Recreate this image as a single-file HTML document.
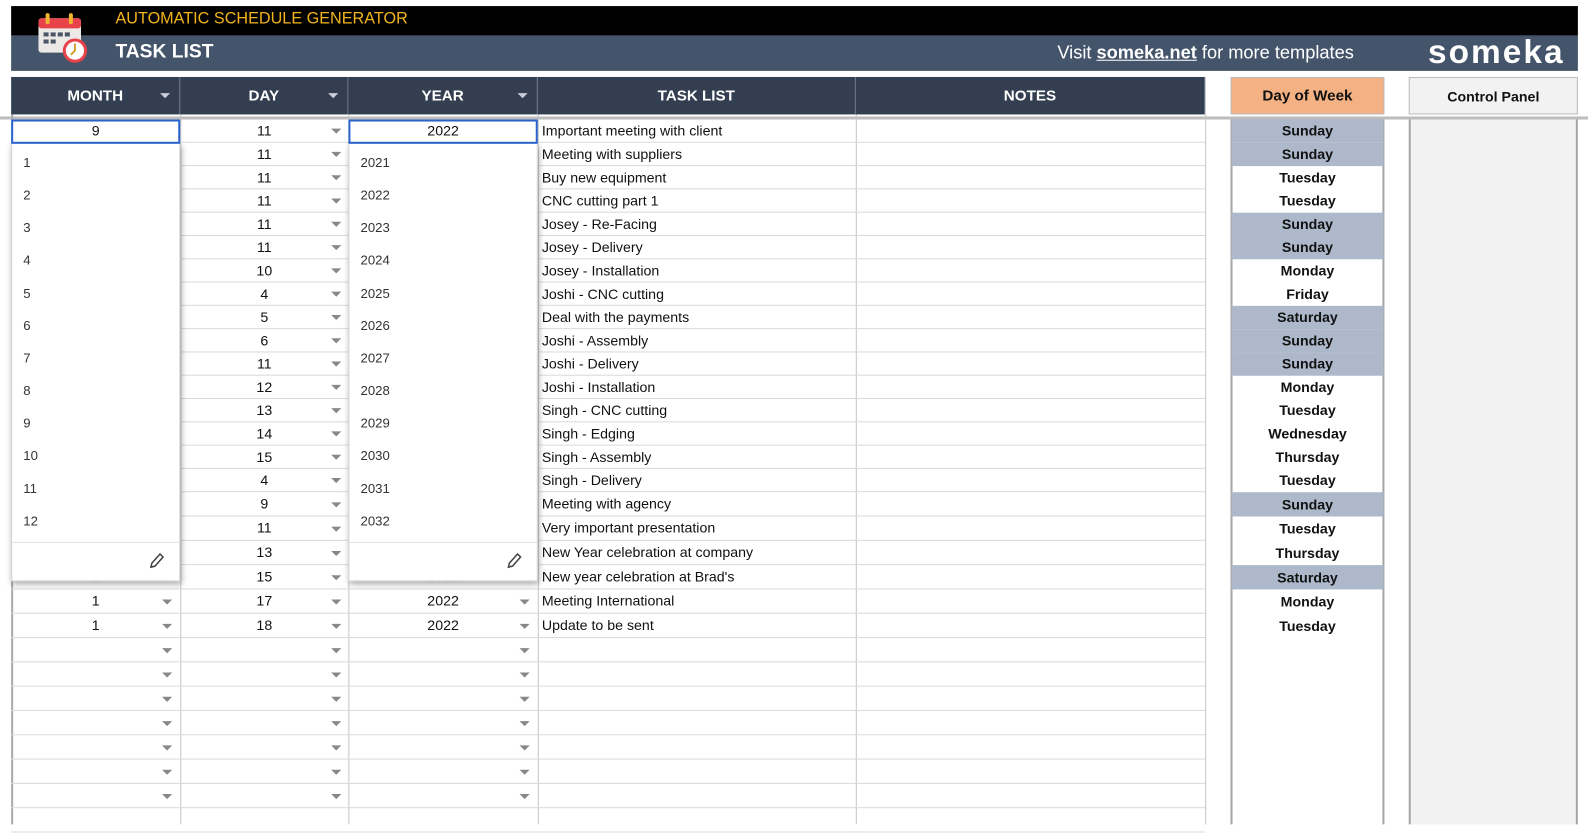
<!DOCTYPE html>
<html><head><meta charset="utf-8"><style>
*{margin:0;padding:0;box-sizing:border-box}
body{width:1588px;height:814px;background:#fff;position:relative;overflow:hidden;font-family:"Liberation Sans",sans-serif;font-size:14px;color:#111}
#w{position:absolute;left:0;top:0;width:1568px;height:804px;transform:scale(1.01276);transform-origin:0 0}
.a{position:absolute}
.top{left:11px;top:6px;width:1547px;height:29px;background:#000}
.nav{left:11px;top:35px;width:1547px;height:35px;background:#44546a}
.hd{top:76px;height:37px;background:#333f50;color:#fff;font-weight:bold;font-size:15px;text-align:center;line-height:37px;border-right:1px solid #6d7a8c}
.hd i{position:absolute;right:9px;top:16px;border-left:5px solid transparent;border-right:5px solid transparent;border-top:5px solid #ccd}
.r{position:absolute;left:11px;width:1179px;border-bottom:1px solid #dadada}
.c{position:absolute;top:0;text-align:center}
.m{left:0;width:167px}.d{left:167px;width:166px}.y{left:333px;width:187px}
.t{left:524px;white-space:nowrap}
.ar{position:absolute;top:50%;margin-top:-2px;border-left:5px solid transparent;border-right:5px solid transparent;border-top:5px solid #888}
.vl{position:absolute;top:113px;height:701px;width:1px;background:#c4c4c4}
.dw{position:absolute;left:1216px;width:150px;text-align:center;font-weight:bold}
.hl{background:#adb9ca}
.dd{position:absolute;background:#fff;box-shadow:1px 3px 6px rgba(0,0,0,.35);border:1px solid #d4d4d4}
.dd div{position:absolute;left:11px;font-size:13px;color:#333}
.sel{position:absolute;border:2px solid #2a62c9;background:#fff;text-align:center;line-height:19px}
</style></head><body><div id="w">
<div class="a top"></div>
<div class="a nav"></div>
<svg class="a" style="left:36px;top:12px" width="54" height="52" viewBox="0 0 54 52">
<rect x="2" y="6" width="42" height="34" rx="3" fill="#ece9e6"/>
<rect x="2" y="6" width="42" height="10" rx="3" fill="#e8424a"/>
<rect x="9" y="1" width="4" height="11" rx="2" fill="#f1b531"/><rect x="32" y="1" width="4" height="11" rx="2" fill="#f1b531"/>
<g fill="#4b5768"><rect x="7" y="20" width="5" height="4"/><rect x="14" y="20" width="5" height="4"/><rect x="21" y="20" width="5" height="4"/><rect x="28" y="20" width="5" height="4"/><rect x="7" y="27" width="5" height="4"/><rect x="14" y="27" width="5" height="4"/></g>
<circle cx="38" cy="38" r="12" fill="#e8424a"/><circle cx="38" cy="38" r="9" fill="#fff"/>
<path d="M38 31v7l-4 4" stroke="#d19a20" stroke-width="1.8" fill="none"/></svg>
<div class="a" style="left:114px;top:10px;color:#f2b41c;font-size:16px">AUTOMATIC SCHEDULE GENERATOR</div>
<div class="a" style="left:114px;top:41px;color:#fff;font-size:19px;font-weight:bold">TASK LIST</div>
<div class="a" style="left:1044px;top:42px;color:#fff;font-size:18px">Visit <b style="text-decoration:underline">someka.net</b> for more templates</div>
<div class="a" style="left:1410px;top:32px;color:#fff;font-size:33px;letter-spacing:2px;font-weight:bold">someka</div>

<div class="a hd" style="left:11px;width:167px">MONTH<i></i></div>
<div class="a hd" style="left:178px;width:166px">DAY<i></i></div>
<div class="a hd" style="left:344px;width:187px">YEAR<i></i></div>
<div class="a hd" style="left:531px;width:314px">TASK LIST</div>
<div class="a hd" style="left:845px;width:345px">NOTES</div>
<div class="a" style="left:1215px;top:76px;width:152px;height:37px;background:#f4b183;border:1px solid #bbb;text-align:center;line-height:36px;font-weight:bold;font-size:15px">Day of Week</div>
<div class="a" style="left:1391px;top:76px;width:167px;height:37px;background:#f2f2f2;border:1px solid #bbb;text-align:center;line-height:36px;font-weight:bold">Control Panel</div>
<div class="a" style="left:0;top:115px;width:1588px;height:3px;background:#bdbdbd"></div>
<div class="a" style="left:1215px;top:118px;width:152px;height:696px;border-left:2px solid #a6a6a6;border-right:2px solid #a6a6a6"></div>
<div class="a" style="left:1391px;top:118px;width:167px;height:696px;background:#f2f2f2;border-left:2px solid #a6a6a6;border-right:2px solid #a6a6a6"></div>

<div class="vl" style="left:11px;background:#aaa;width:2px"></div>
<div class="vl" style="left:178px"></div><div class="vl" style="left:344px"></div><div class="vl" style="left:531px"></div><div class="vl" style="left:845px"></div><div class="vl" style="left:1190px"></div>

<div class="r" style="top:118px;height:23px;line-height:22px"><div class="c d">11</div><span class="ar" style="left:316px"></span><div class="c t">Important meeting with client</div></div>
<div class="r" style="top:141px;height:23px;line-height:22px"><div class="c d">11</div><span class="ar" style="left:316px"></span><div class="c t">Meeting with suppliers</div></div>
<div class="r" style="top:164px;height:23px;line-height:22px"><div class="c d">11</div><span class="ar" style="left:316px"></span><div class="c t">Buy new equipment</div></div>
<div class="r" style="top:187px;height:23px;line-height:22px"><div class="c d">11</div><span class="ar" style="left:316px"></span><div class="c t">CNC cutting part 1</div></div>
<div class="r" style="top:210px;height:23px;line-height:22px"><div class="c d">11</div><span class="ar" style="left:316px"></span><div class="c t">Josey - Re-Facing</div></div>
<div class="r" style="top:233px;height:23px;line-height:22px"><div class="c d">11</div><span class="ar" style="left:316px"></span><div class="c t">Josey - Delivery</div></div>
<div class="r" style="top:256px;height:23px;line-height:22px"><div class="c d">10</div><span class="ar" style="left:316px"></span><div class="c t">Josey - Installation</div></div>
<div class="r" style="top:279px;height:23px;line-height:22px"><div class="c d">4</div><span class="ar" style="left:316px"></span><div class="c t">Joshi - CNC cutting</div></div>
<div class="r" style="top:302px;height:23px;line-height:22px"><div class="c d">5</div><span class="ar" style="left:316px"></span><div class="c t">Deal with the payments</div></div>
<div class="r" style="top:325px;height:23px;line-height:22px"><div class="c d">6</div><span class="ar" style="left:316px"></span><div class="c t">Joshi - Assembly</div></div>
<div class="r" style="top:348px;height:23px;line-height:22px"><div class="c d">11</div><span class="ar" style="left:316px"></span><div class="c t">Joshi - Delivery</div></div>
<div class="r" style="top:371px;height:23px;line-height:22px"><div class="c d">12</div><span class="ar" style="left:316px"></span><div class="c t">Joshi - Installation</div></div>
<div class="r" style="top:394px;height:23px;line-height:22px"><div class="c d">13</div><span class="ar" style="left:316px"></span><div class="c t">Singh - CNC cutting</div></div>
<div class="r" style="top:417px;height:23px;line-height:22px"><div class="c d">14</div><span class="ar" style="left:316px"></span><div class="c t">Singh - Edging</div></div>
<div class="r" style="top:440px;height:23px;line-height:22px"><div class="c d">15</div><span class="ar" style="left:316px"></span><div class="c t">Singh - Assembly</div></div>
<div class="r" style="top:463px;height:23px;line-height:22px"><div class="c d">4</div><span class="ar" style="left:316px"></span><div class="c t">Singh - Delivery</div></div>
<div class="r" style="top:486px;height:24px;line-height:23px"><div class="c d">9</div><span class="ar" style="left:316px"></span><div class="c t">Meeting with agency</div></div>
<div class="r" style="top:510px;height:24px;line-height:23px"><div class="c d">11</div><span class="ar" style="left:316px"></span><div class="c t">Very important presentation</div></div>
<div class="r" style="top:534px;height:24px;line-height:23px"><div class="c d">13</div><span class="ar" style="left:316px"></span><div class="c t">New Year celebration at company</div></div>
<div class="r" style="top:558px;height:24px;line-height:23px"><div class="c m">1</div><span class="ar" style="left:149px"></span><div class="c d">15</div><span class="ar" style="left:316px"></span><div class="c y">2022</div><span class="ar" style="left:502px"></span><div class="c t">New year celebration at Brad's</div></div>
<div class="r" style="top:582px;height:24px;line-height:23px"><div class="c m">1</div><span class="ar" style="left:149px"></span><div class="c d">17</div><span class="ar" style="left:316px"></span><div class="c y">2022</div><span class="ar" style="left:502px"></span><div class="c t">Meeting International</div></div>
<div class="r" style="top:606px;height:24px;line-height:23px"><div class="c m">1</div><span class="ar" style="left:149px"></span><div class="c d">18</div><span class="ar" style="left:316px"></span><div class="c y">2022</div><span class="ar" style="left:502px"></span><div class="c t">Update to be sent</div></div>
<div class="r" style="top:630px;height:24px"><span class="ar" style="left:149px"></span><span class="ar" style="left:316px"></span><span class="ar" style="left:502px"></span></div>
<div class="r" style="top:654px;height:24px"><span class="ar" style="left:149px"></span><span class="ar" style="left:316px"></span><span class="ar" style="left:502px"></span></div>
<div class="r" style="top:678px;height:24px"><span class="ar" style="left:149px"></span><span class="ar" style="left:316px"></span><span class="ar" style="left:502px"></span></div>
<div class="r" style="top:702px;height:24px"><span class="ar" style="left:149px"></span><span class="ar" style="left:316px"></span><span class="ar" style="left:502px"></span></div>
<div class="r" style="top:726px;height:24px"><span class="ar" style="left:149px"></span><span class="ar" style="left:316px"></span><span class="ar" style="left:502px"></span></div>
<div class="r" style="top:750px;height:24px"><span class="ar" style="left:149px"></span><span class="ar" style="left:316px"></span><span class="ar" style="left:502px"></span></div>
<div class="r" style="top:774px;height:24px"><span class="ar" style="left:149px"></span><span class="ar" style="left:316px"></span><span class="ar" style="left:502px"></span></div>
<div class="r" style="top:798px;height:24px"></div>

<div class="dw hl" style="top:118px;height:23px;line-height:22px">Sunday</div>
<div class="dw hl" style="top:141px;height:23px;line-height:22px">Sunday</div>
<div class="dw" style="top:164px;height:23px;line-height:22px">Tuesday</div>
<div class="dw" style="top:187px;height:23px;line-height:22px">Tuesday</div>
<div class="dw hl" style="top:210px;height:23px;line-height:22px">Sunday</div>
<div class="dw hl" style="top:233px;height:23px;line-height:22px">Sunday</div>
<div class="dw" style="top:256px;height:23px;line-height:22px">Monday</div>
<div class="dw" style="top:279px;height:23px;line-height:22px">Friday</div>
<div class="dw hl" style="top:302px;height:23px;line-height:22px">Saturday</div>
<div class="dw hl" style="top:325px;height:23px;line-height:22px">Sunday</div>
<div class="dw hl" style="top:348px;height:23px;line-height:22px">Sunday</div>
<div class="dw" style="top:371px;height:23px;line-height:22px">Monday</div>
<div class="dw" style="top:394px;height:23px;line-height:22px">Tuesday</div>
<div class="dw" style="top:417px;height:23px;line-height:22px">Wednesday</div>
<div class="dw" style="top:440px;height:23px;line-height:22px">Thursday</div>
<div class="dw" style="top:463px;height:23px;line-height:22px">Tuesday</div>
<div class="dw hl" style="top:486px;height:24px;line-height:24px">Sunday</div>
<div class="dw" style="top:510px;height:24px;line-height:24px">Tuesday</div>
<div class="dw" style="top:534px;height:24px;line-height:24px">Thursday</div>
<div class="dw hl" style="top:558px;height:24px;line-height:24px">Saturday</div>
<div class="dw" style="top:582px;height:24px;line-height:24px">Monday</div>
<div class="dw" style="top:606px;height:24px;line-height:24px">Tuesday</div>

<div class="dd" style="left:11px;top:141px;width:167px;height:433px">
<div style="top:11px">1</div><div style="top:43px">2</div><div style="top:75px">3</div><div style="top:107px">4</div><div style="top:140px">5</div><div style="top:172px">6</div><div style="top:204px">7</div><div style="top:236px">8</div><div style="top:268px">9</div><div style="top:300px">10</div><div style="top:333px">11</div><div style="top:365px">12</div>
<span style="position:absolute;left:0;right:0;top:393px;border-top:1px solid #e0e0e0"></span>
<svg style="position:absolute;left:134px;top:403px" width="16" height="18" viewBox="0 0 16 18"><path d="M3 15l1-4 8-9 3 3-8 9z" fill="none" stroke="#444" stroke-width="1.5"/></svg>
</div>
<div class="dd" style="left:344px;top:141px;width:187px;height:433px">
<div style="top:11px">2021</div><div style="top:43px">2022</div><div style="top:75px">2023</div><div style="top:107px">2024</div><div style="top:140px">2025</div><div style="top:172px">2026</div><div style="top:204px">2027</div><div style="top:236px">2028</div><div style="top:268px">2029</div><div style="top:300px">2030</div><div style="top:333px">2031</div><div style="top:365px">2032</div>
<span style="position:absolute;left:0;right:0;top:393px;border-top:1px solid #e0e0e0"></span>
<svg style="position:absolute;left:154px;top:403px" width="16" height="18" viewBox="0 0 16 18"><path d="M3 15l1-4 8-9 3 3-8 9z" fill="none" stroke="#444" stroke-width="1.5"/></svg>
</div>
<div class="sel" style="left:11px;top:118px;width:167px;height:24px">9</div>
<div class="sel" style="left:344px;top:118px;width:187px;height:24px">2022</div>
</div></body></html>
